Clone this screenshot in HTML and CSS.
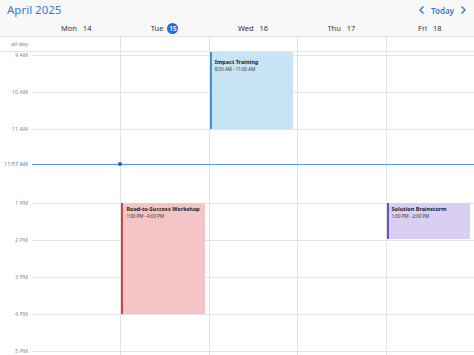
FILE: index.html
```html
<!DOCTYPE html>
<html lang="en">
<head>
    <meta charset="UTF-8">
    <meta name="viewport" content="width=device-width, initial-scale=1.0">
    <link rel="stylesheet" href="styles.css">
    <title>Week view</title>
</head>
<body>
    <div class="cal">
        <header class="top">
            <div class="toolbar">
                <h1 class="month">April 2025</h1>
                <nav class="nav">
                    <svg class="chev" viewBox="0 0 8 10" width="8" height="10"><path d="M5.5 1.5 2 5l3.5 3.5" /></svg>
                    <span class="today-btn">Today</span>
                    <svg class="chev" viewBox="0 0 8 10" width="8" height="10"><path d="M2.5 1.5 6 5 2.5 8.5" /></svg>
                </nav>
            </div>
            <div class="days">
                <div></div>
                <div class="day">Mon <span class="num">14</span></div>
                <div class="day day-today">Tue <span class="num">15</span></div>
                <div class="day">Wed <span class="num">16</span></div>
                <div class="day">Thu <span class="num">17</span></div>
                <div class="day">Fri <span class="num">18</span></div>
            </div>
        </header>

        <div class="allday">
            <div class="allday-label">all-day</div>
            <div class="cell"></div>
            <div class="cell"></div>
            <div class="cell"></div>
            <div class="cell"></div>
            <div class="cell"></div>
        </div>

        <div class="body">
            <div class="gutter">
                <div class="hour">9 AM</div>
                <div class="hour">10 AM</div>
                <div class="hour">11 AM</div>
                <div class="hour"></div>
                <div class="hour">1 PM</div>
                <div class="hour">2 PM</div>
                <div class="hour">3 PM</div>
                <div class="hour">4 PM</div>
                <div class="hour">5 PM</div>
            </div>
            <div class="lines">
                <div class="line"></div>
                <div class="line"></div>
                <div class="line"></div>
                <div class="line line-hidden"></div>
                <div class="line"></div>
                <div class="line"></div>
                <div class="line"></div>
                <div class="line"></div>
                <div class="line"></div>
            </div>

            <div class="col col-mon"></div>
            <div class="col col-tue">
                <div class="event ev-red" style="top: 151px; height: 111px;">
                    <div class="ev-title">Road-to-Success Workshop</div>
                    <div class="ev-time">1:00 PM - 4:00 PM</div>
                </div>
            </div>
            <div class="col col-wed">
                <div class="event ev-blue ev-clipped" style="top: 0; height: 77px;">
                    <div class="ev-title">Impact Training</div>
                    <div class="ev-time">8:00 AM - 11:00 AM</div>
                </div>
            </div>
            <div class="col col-thu"></div>
            <div class="col col-fri">
                <div class="event ev-purple" style="top: 151px; height: 36px;">
                    <div class="ev-title">Solution Brainstorm</div>
                    <div class="ev-time">1:00 PM - 2:00 PM</div>
                </div>
            </div>

            <div class="now">
                <span class="now-label">11:57 AM</span>
                <span class="now-line"></span>
                <span class="now-dot"></span>
            </div>
        </div>
    </div>
</body>
</html>
```

FILE: styles.css
```css
* { box-sizing: border-box; }
body {
    margin: 0;
    font-family: "Noto Sans", "Open Sans", sans-serif;
    color: #222;
    background: #fff;
}
.cal {
    width: 474px;
    height: 355px;
    display: flex;
    flex-direction: column;
    overflow: hidden;
}

/* header */
.top {
    background: #f8f8f8;
    border-bottom: 1px solid #e3e3e3;
}
.toolbar {
    height: 20px;
    display: flex;
    align-items: center;
    justify-content: space-between;
    padding: 0 7px 0 7px;
}
.month {
    margin: 0;
    font-size: 11.5px;
    font-weight: 400;
    color: #2f7bd6;
    line-height: 20px;
}
.nav {
    display: flex;
    align-items: center;
    gap: 5px;
}
.chev {
    fill: none;
    stroke: #2f7bd6;
    stroke-width: 1.4;
}
.today-btn {
    font-size: 8px;
    font-weight: 600;
    color: #2f7bd6;
}
.days {
    height: 16px;
    display: grid;
    grid-template-columns: 32px repeat(5, 1fr);
    align-items: center;
}
.day {
    text-align: center;
    font-size: 7.5px;
    color: #333;
}
.day .num { margin-left: 4px; }
.day-today .num {
    display: inline-block;
    width: 11px;
    height: 11px;
    line-height: 11px;
    border-radius: 50%;
    background: #1670e0;
    color: #fff;
    font-size: 6.5px;
    font-weight: 600;
    text-align: center;
    margin-left: 2px;
}

/* all-day */
.allday {
    height: 15px;
    display: grid;
    grid-template-columns: 32px repeat(5, 1fr);
    border-bottom: 1px solid #e3e3e3;
}
.allday-label {
    font-size: 5.5px;
    color: #888;
    text-align: right;
    padding-right: 4px;
    line-height: 14px;
}
.allday .cell + .cell { border-left: 1px solid #e3e3e3; }

/* time grid */
.body {
    flex: 1;
    position: relative;
    overflow: hidden;
    display: grid;
    grid-template-columns: 32px repeat(5, 1fr);
    grid-template-rows: 1fr;
}
.gutter {
    grid-column: 1;
    grid-row: 1;
    margin-top: -15.5px;
}
.hour {
    height: 37px;
    line-height: 37px;
    font-size: 5.5px;
    color: #888;
    text-align: right;
    padding-right: 4px;
}
.lines {
    grid-column: 2 / -1;
    grid-row: 1;
    padding-top: 3px;
}
.line {
    height: 37px;
    border-top: 1px solid #e4e4e4;
}
.line-hidden { border-top-color: transparent; }
.col {
    grid-row: 1;
    position: relative;
}
.col-mon { grid-column: 2; }
.col-tue { grid-column: 3; }
.col-wed { grid-column: 4; }
.col-thu { grid-column: 5; }
.col-fri { grid-column: 6; }
.col + .col { border-left: 1px solid #e3e3e3; }

.event {
    position: absolute;
    left: 0;
    right: 4px;
    padding: 3px 3px;
    border-left: 2px solid;
    overflow: hidden;
}
.ev-clipped { padding-top: 7px; }
.ev-title {
    font-size: 5.5px;
    font-weight: 700;
    line-height: 7px;
    white-space: nowrap;
}
.ev-time {
    font-size: 4.5px;
    line-height: 7px;
    color: #333;
}
.ev-blue { background: #c6e4f4; border-color: #3d94d6; }
.ev-red { background: #f4c5c7; border-color: #c9484e; }
.ev-purple { background: #d9cff2; border-color: #6d52c6; }

/* current time */
.now {
    position: absolute;
    top: 112px;
    left: 0;
    right: 0;
    height: 0;
    display: flex;
    align-items: center;
}
.now-label {
    width: 32px;
    flex: none;
    text-align: right;
    padding-right: 4px;
    font-size: 5.5px;
    color: #3b7ddd;
}
.now-line {
    flex: 1;
    height: 1px;
    background: #5b93e8;
}
.now-dot {
    position: absolute;
    left: calc(32px + (100% - 32px) / 5);
    width: 4px;
    height: 4px;
    margin-left: -2px;
    border-radius: 50%;
    background: #1f5fc4;
}
```
